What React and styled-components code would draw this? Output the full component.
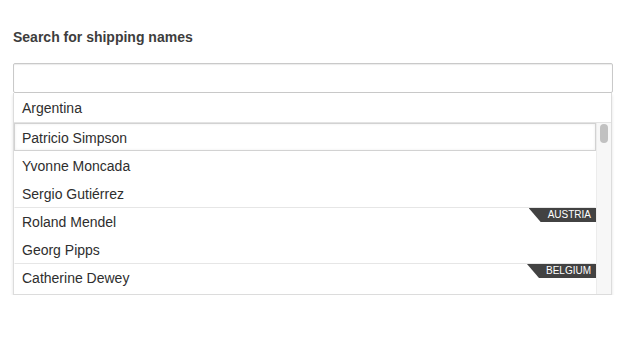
import React from "react";
import styled, { createGlobalStyle } from "styled-components";

const Global = createGlobalStyle`
  html, body { margin: 0; padding: 0; background: #fff; }
  body { font-family: "Liberation Sans", Arial, sans-serif; }
  * { box-sizing: border-box; }
`;

const Page = styled.div`
  padding: 27px 12px 0 13px;
  width: 625px;
`;

const Label = styled.label`
  display: block;
  font-size: 14px;
  font-weight: bold;
  line-height: 20px;
  color: #3d3d3d;
  margin-bottom: 16px;
`;

const Field = styled.div`
  width: 600px;
`;

const Input = styled.input`
  display: block;
  width: 600px;
  height: 30px;
  margin: 0;
  border: 1px solid #c9c9c9;
  border-radius: 2px;
  box-shadow: inset 0 1px 1px rgba(0, 0, 0, 0.08);
  outline: none;
  padding: 0 8px;
  font: 14px "Liberation Sans", Arial, sans-serif;
  color: #2e2e2e;
`;

const Popup = styled.div`
  width: 599px;
  border: 1px solid #dcdcdc;
  border-top: none;
  box-shadow: 0 2px 3px rgba(0, 0, 0, 0.12);
  background: #fff;
`;

const Header = styled.div`
  height: 30px;
  padding: 1px 0 0 8px;
  line-height: 28px;
  font-size: 14px;
  color: #2e2e2e;
  border-bottom: 1px solid #e3e3e3;
`;

const Body = styled.div`
  display: flex;
  height: 171px;
`;

const List = styled.ul`
  flex: 1;
  margin: 0;
  padding: 0;
  list-style: none;
  overflow: hidden;
`;

const Item = styled.li`
  position: relative;
  height: 28px;
  line-height: 26px;
  padding: 1px 7px 0;
  font-size: 14px;
  color: #2e2e2e;
  border: 1px solid transparent;
  border-top-color: ${(p) => (p.$groupStart ? "#e6e6e6" : "transparent")};
  ${(p) =>
    p.$focused &&
    `
    border-color: #d2d2d2;
    box-shadow: inset 0 0 3px rgba(0, 0, 0, 0.07);
  `}
`;

const Group = styled.span`
  position: absolute;
  top: 0;
  right: -1px;
  height: 14px;
  line-height: 14px;
  padding: 0 5px 0 19px;
  font-size: 10px;
  text-transform: uppercase;
  color: #fff;
  background: #424242;
  clip-path: polygon(0 0, 100% 0, 100% 100%, 12px 100%);
`;

const Scrollbar = styled.div`
  width: 15px;
  background: #f7f7f7;
  border-left: 1px solid #ececec;
  padding-top: 1px;
`;

const Thumb = styled.div`
  width: 8px;
  height: 19px;
  margin-left: 3px;
  border-radius: 4px;
  background: #c1c1c1;
`;

const groups = [
  { country: "Argentina", names: ["Patricio Simpson", "Yvonne Moncada", "Sergio Gutiérrez"] },
  { country: "Austria", names: ["Roland Mendel", "Georg Pipps"] },
  { country: "Belgium", names: ["Catherine Dewey"] },
];

export default function App() {
  return (
    <>
      <Global />
      <Page>
        <Label htmlFor="customers">Search for shipping names</Label>
        <Field>
          <Input id="customers" type="text" />
          <Popup>
            <Header>Argentina</Header>
            <Body>
              <List>
                {groups.map((g, gi) =>
                  g.names.map((n, ni) => (
                    <Item
                      key={n}
                      $groupStart={gi > 0 && ni === 0}
                      $focused={gi === 0 && ni === 0}
                    >
                      {n}
                      {gi > 0 && ni === 0 && <Group>{g.country}</Group>}
                    </Item>
                  ))
                )}
              </List>
              <Scrollbar>
                <Thumb />
              </Scrollbar>
            </Body>
          </Popup>
        </Field>
      </Page>
    </>
  );
}
